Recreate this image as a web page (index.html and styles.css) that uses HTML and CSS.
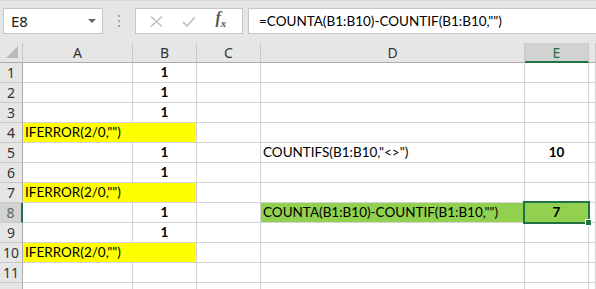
FILE: index.html
```html
<html>

<head>
  <title>Sheet1 - Excel</title>
  <link rel="stylesheet" href="styles.css">
</head>

<body>
  <div class="formula-bar">
    <div class="name-box">
      E8
      <svg class="name-arrow" width="8" height="4" viewBox="0 0 8 4"><path d="M0 0h8L4 4z" fill="#666"/></svg>
    </div>
    <div class="grip">
      <svg width="3" height="13" viewBox="0 0 3 13">
        <rect x="0" y="0" width="2" height="2" fill="#a8a8a8"/>
        <rect x="0" y="5" width="2" height="2" fill="#a8a8a8"/>
        <rect x="0" y="10" width="2" height="2" fill="#a8a8a8"/>
      </svg>
    </div>
    <div class="fx-buttons">
      <svg width="13" height="11" viewBox="0 0 13 11"><path d="M1 0.5l11 10M12 0.5l-11 10" stroke="#c3c3c3" stroke-width="1.6" fill="none"/></svg>
      <svg width="14" height="11" viewBox="0 0 14 11"><path d="M1 6l4 4L13 1" stroke="#c3c3c3" stroke-width="1.8" fill="none"/></svg>
      <span class="fx">f<sub>x</sub></span>
    </div>
    <div class="formula-input">=COUNTA(B1:B10)-COUNTIF(B1:B10,"")</div>
  </div>

  <div class="sheet">
    <div class="corner"><svg width="12" height="12" viewBox="0 0 12 12"><path d="M12 0V12H0z" fill="#b9b9b9"/></svg></div>
    <div class="col-head">A</div>
    <div class="col-head">B</div>
    <div class="col-head">C</div>
    <div class="col-head">D</div>
    <div class="col-head active">E</div>
    <div class="col-head"></div>

    <div class="row-head">1</div>
    <div class="cell"></div><div class="cell num">1</div><div class="cell"></div><div class="cell"></div><div class="cell"></div><div class="cell"></div>

    <div class="row-head">2</div>
    <div class="cell"></div><div class="cell num">1</div><div class="cell"></div><div class="cell"></div><div class="cell"></div><div class="cell"></div>

    <div class="row-head">3</div>
    <div class="cell"></div><div class="cell num">1</div><div class="cell"></div><div class="cell"></div><div class="cell"></div><div class="cell"></div>

    <div class="row-head">4</div>
    <div class="cell yellow wide">IFERROR(2/0,"")</div><div class="cell"></div><div class="cell"></div><div class="cell"></div><div class="cell"></div>

    <div class="row-head">5</div>
    <div class="cell"></div><div class="cell num">1</div><div class="cell"></div><div class="cell">COUNTIFS(B1:B10,"&lt;&gt;")</div><div class="cell num">10</div><div class="cell"></div>

    <div class="row-head">6</div>
    <div class="cell"></div><div class="cell num">1</div><div class="cell"></div><div class="cell"></div><div class="cell"></div><div class="cell"></div>

    <div class="row-head">7</div>
    <div class="cell yellow wide">IFERROR(2/0,"")</div><div class="cell"></div><div class="cell"></div><div class="cell"></div><div class="cell"></div>

    <div class="row-head active">8</div>
    <div class="cell"></div><div class="cell num">1</div><div class="cell"></div><div class="cell green">COUNTA(B1:B10)-COUNTIF(B1:B10,"")</div><div class="cell num green selected">7</div><div class="cell"></div>

    <div class="row-head">9</div>
    <div class="cell"></div><div class="cell num">1</div><div class="cell"></div><div class="cell"></div><div class="cell"></div><div class="cell"></div>

    <div class="row-head">10</div>
    <div class="cell yellow wide">IFERROR(2/0,"")</div><div class="cell"></div><div class="cell"></div><div class="cell"></div><div class="cell"></div>

    <div class="row-head">11</div>
    <div class="cell"></div><div class="cell"></div><div class="cell"></div><div class="cell"></div><div class="cell"></div><div class="cell"></div>

    <div class="row-head"></div>
    <div class="cell"></div><div class="cell"></div><div class="cell"></div><div class="cell"></div><div class="cell"></div><div class="cell"></div>
  </div>
</body>

</html>
```

FILE: styles.css
```css
body {
  margin: 0;
  background: #e6e6e6;
  overflow: hidden;
  font-family: 'Lato', 'Liberation Sans', sans-serif;
  color: #000;
}

/* formula bar */

.formula-bar {
  display: flex;
  align-items: stretch;
  height: 43px;
  padding-top: 7px;
  box-sizing: border-box;
  border-top: 1px solid #d9d9d9;
}

.name-box {
  margin-left: 3px;
  width: 100px;
  height: 26px;
  box-sizing: border-box;
  background: #fff;
  border: 1px solid #c6c6c6;
  display: flex;
  align-items: center;
  justify-content: space-between;
  padding: 0 6px 0 7px;
  font-size: 15px;
  font-family: 'Noto Sans', sans-serif;
  color: #222;
}

.grip {
  width: 32px;
  height: 26px;
  display: flex;
  align-items: center;
  justify-content: center;
}

.fx-buttons {
  width: 108px;
  height: 26px;
  box-sizing: border-box;
  background: #fff;
  border: 1px solid #c6c6c6;
  display: flex;
  align-items: center;
  justify-content: space-around;
  padding: 0 6px 0 4px;
}

.fx {
  font-family: 'Liberation Serif', serif;
  font-style: italic;
  font-weight: bold;
  font-size: 16px;
  color: #555;
  margin-top: -4px;
}

.fx sub {
  font-size: 11px;
}

.formula-input {
  flex: 1;
  margin-left: 5px;
  height: 26px;
  box-sizing: border-box;
  background: #fff;
  border: 1px solid #c6c6c6;
  border-right: none;
  padding-left: 10px;
  display: flex;
  align-items: center;
  font-size: 13.5px;
  white-space: nowrap;
}

/* grid */

.sheet {
  display: grid;
  grid-template-columns: 23px 110px 64px 64px 264px 64px 1fr;
  grid-auto-rows: 20px;
  background: #fff;
}

.corner,
.col-head,
.row-head {
  background: #e6e6e6;
  box-sizing: border-box;
  border-right: 1px solid #c8c8c8;
  border-bottom: 1px solid #ababab;
  font-family: 'Noto Sans', sans-serif;
  font-size: 14px;
  color: #333;
  display: flex;
  align-items: center;
  justify-content: center;
}

.corner {
  justify-content: flex-end;
  align-items: flex-end;
  padding: 0 4px 4px 0;
}

.col-head.active {
  background: #d2d2d2;
  border-bottom: 2px solid #217346;
  color: #217346;
}

.row-head {
  border-bottom: 1px solid #c8c8c8;
  border-right: 1px solid #ababab;
}

.row-head.active {
  background: #d2d2d2;
  border-right: 2px solid #217346;
  color: #5a6b5f;
}

.cell {
  box-sizing: border-box;
  border-right: 1px solid #d4d4d4;
  border-bottom: 1px solid #d4d4d4;
  font-size: 13.5px;
  padding: 0 2px 2px;
  display: flex;
  align-items: flex-end;
  white-space: nowrap;
}

.cell.num {
  justify-content: center;
  font-weight: bold;
}

.cell.wide {
  grid-column: span 2;
}

.cell.yellow {
  background: #ffff00;
}

.cell.green {
  background: #92d050;
}

.cell.selected {
  position: relative;
}

.cell.selected::after {
  content: '';
  position: absolute;
  left: -2px;
  top: -2px;
  right: -2px;
  bottom: -2px;
  border: 2px solid #217346;
}

.cell.selected::before {
  content: '';
  position: absolute;
  right: -4px;
  bottom: -4px;
  width: 5px;
  height: 5px;
  background: #217346;
  border: 1px solid #fff;
  z-index: 1;
}
```
